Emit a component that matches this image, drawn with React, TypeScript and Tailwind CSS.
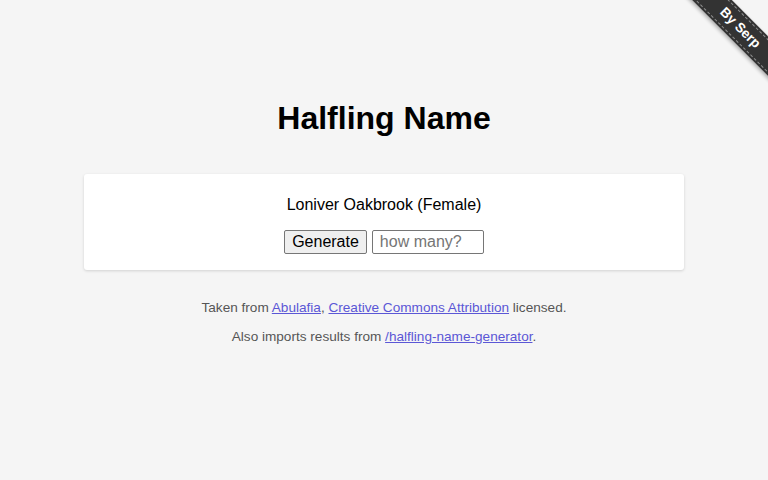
export default function App() {
  return (
    <div className="relative min-h-[480px] w-full overflow-hidden bg-[#f5f5f5] font-['Liberation_Sans',Arial,sans-serif] text-black">
      <div className="absolute right-0 top-0 h-[150px] w-[150px] overflow-hidden">
        <div className="absolute left-[22px] top-[14px] h-[28px] w-[200px] rotate-45 bg-[#333] py-[2px] shadow-[0_2px_4px_rgba(0,0,0,0.3)]">
          <div className="flex h-full items-center justify-center border-y border-dashed border-white/45 text-[13.5px] font-bold text-white">
            By Serp
          </div>
        </div>
      </div>

      <div className="flex flex-col items-center pt-[100px]">
        <h1 className="text-[32px] font-bold leading-[37px]">Halfling Name</h1>

        <div className="mt-[37px] flex w-[600px] flex-col items-center gap-[13px] rounded-[3px] bg-white pb-4 pt-[19px] shadow-[0_1px_3px_rgba(0,0,0,0.15)]">
          <div className="text-base leading-6">Loniver Oakbrook (Female)</div>
          <div className="flex items-center gap-[5px]">
            <button className="h-6 rounded-[2px] border border-[#767676] bg-[#efefef] px-[7px] text-base leading-5">
              Generate
            </button>
            <input
              placeholder="how many?"
              className="h-6 w-[112px] rounded-[2px] border border-[#767676] bg-white px-[7px] text-base placeholder:text-[#757575]"
            />
          </div>
        </div>

        <p className="mt-[30px] text-[13.6px] leading-[16px] text-[#555]">
          Taken from <a href="#" className="text-[#5b57d6] underline">Abulafia</a>,{' '}
          <a href="#" className="text-[#5b57d6] underline">Creative Commons Attribution</a> licensed.
        </p>
        <p className="mt-[13px] text-[13.6px] leading-[16px] text-[#555]">
          Also imports results from{' '}
          <a href="#" className="text-[#5b57d6] underline">/halfling-name-generator</a>.
        </p>
      </div>
    </div>
  )
}
